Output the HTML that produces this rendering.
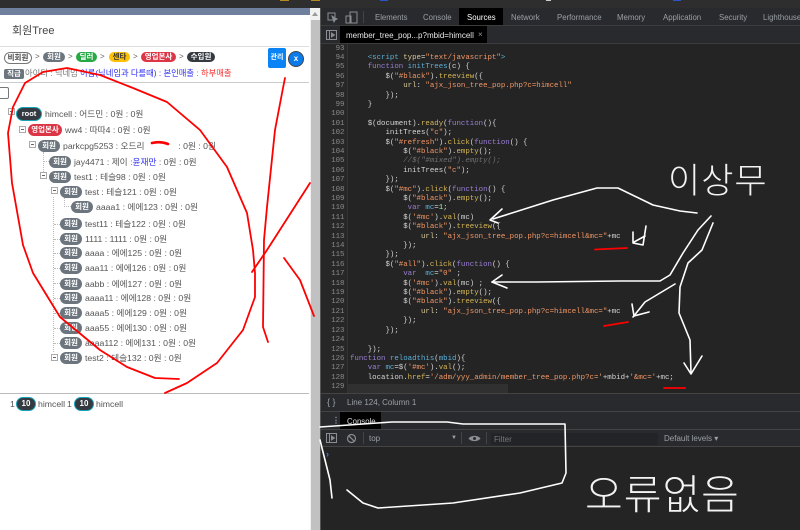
<!DOCTYPE html>
<html lang="ko">
<head>
<meta charset="utf-8">
<style>
html,body{margin:0;padding:0;width:800px;height:530px;overflow:hidden;background:#fff}
#w{position:relative;width:800px;height:530px;overflow:hidden;filter:blur(.25px);font-family:"Liberation Sans","Noto Sans CJK KR",sans-serif}
.a{position:absolute}
.t{position:absolute;white-space:nowrap;font-size:8.7px;line-height:12px;color:#555}
.b{display:inline-block;font-weight:700;color:#fff;background:#6c757d;border-radius:6px;font-size:7.5px;line-height:12px;height:12px;width:22px;text-align:center;margin-right:3px;vertical-align:middle;position:relative;top:-1px}
.r{background:#dc3545}
.lg{position:absolute;top:52px;height:10px;line-height:10px;font-size:7.5px;font-weight:700;color:#fff;text-align:center;border-radius:6px}
.ar{position:absolute;top:52px;font-size:8px;line-height:10px;color:#666}
.bx{position:absolute;width:5px;height:5px;border:1px solid #aaa;background:#fff}
.bx:after{content:"";position:absolute;left:1px;right:1px;top:2px;height:1px;background:#666}
.v{position:absolute;border-left:1px dotted #bbb;width:0}
.h{position:absolute;border-top:1px dotted #bbb;height:0}
.tab{position:absolute;top:12px;font-size:7.8px;line-height:11px;color:#9aa0a6;white-space:nowrap}
pre{margin:0;font-family:"Liberation Mono",monospace;font-size:7.4px;line-height:9.4px}
#code{position:absolute;left:350px;top:44.5px;color:#d5d5d5}
#nums{position:absolute;left:320px;top:44.5px;width:24.5px;text-align:right;color:#8a8a8a}
.k{color:#9a7fd5}.s{color:#f29766}.d{color:#5db0d7}.y{color:#d6b656}.c{color:#707070;font-style:italic}.g{color:#a1f7b5}.u{color:#d8c89a}
</style>
</head>
<body>
<div id="w">
<!-- top strip -->
<div class="a" style="left:0;top:0;width:800px;height:8px;background:#2e2e2e"></div>
<div class="a" style="left:280px;top:0;width:9px;height:1px;background:#b58a1e"></div>
<div class="a" style="left:311px;top:0;width:9px;height:1px;background:#b58a1e"></div>
<div class="a" style="left:380px;top:0;width:8px;height:1px;background:#2a55c8"></div>
<div class="a" style="left:546px;top:0;width:5px;height:1px;background:#ccc"></div>
<div class="a" style="left:673px;top:0;width:8px;height:1px;background:#2a55c8"></div>

<!-- left page -->
<div class="a" style="left:0;top:8px;width:310px;height:7px;background:#6f7f9e"></div>
<div class="a" style="left:310px;top:8px;width:10px;height:522px;background:#f1f1f1"></div>
<div class="a" style="left:311px;top:20px;width:9px;height:510px;background:#c1c1c1"></div>
<div class="a" style="left:312px;top:12px;width:0;height:0;border:3px solid transparent;border-bottom:4px solid #999;border-top:0"></div>
<div class="t" style="left:12px;top:24px;font-size:11px;line-height:14px;color:#444">회원Tree</div>
<div class="a" style="left:0;top:46px;width:309px;height:1px;background:#ddd"></div>
<div class="a" style="left:0;top:82px;width:309px;height:1px;background:#ccc"></div>

<div class="lg" style="left:4px;width:26px;background:#fff;color:#444;border:1px solid #777;top:52px">비회원</div>
<div class="ar" style="left:35px">&gt;</div>
<div class="lg" style="left:43px;width:22px;background:#6c757d">회원</div>
<div class="ar" style="left:68px">&gt;</div>
<div class="lg" style="left:76px;width:21px;background:#28a745">딜러</div>
<div class="ar" style="left:100px">&gt;</div>
<div class="lg" style="left:109px;width:21px;background:#ffc107;color:#333">센타</div>
<div class="ar" style="left:133px">&gt;</div>
<div class="lg" style="left:141px;width:35px;background:#dc3545">영업본사</div>
<div class="ar" style="left:179px">&gt;</div>
<div class="lg" style="left:187px;width:28px;background:#343a40">수입원</div>

<div class="lg" style="left:4px;top:69px;width:20px;background:#6c757d;border-radius:2px">직급</div>
<div class="t" style="left:25px;top:67px;font-size:8.3px;color:#777">아이디 : 닉네임 <span style="color:#3030f0">이름(닉네임과 다를때) : 본인매출</span> : <span style="color:#f03030">하부매출</span></div>

<div class="a" style="left:268px;top:48px;width:18px;height:20px;background:#0a84f5;border-radius:2px;color:#fff;font-size:7px;line-height:20px;text-align:center;font-weight:700">관리</div>
<div class="a" style="left:289px;top:52px;width:14px;height:14px;background:#0a7bea;border-radius:50%;box-shadow:0 0 0 1px #444;color:#fff;font-size:8px;line-height:13px;text-align:center;font-weight:700">x</div>
<div class="a" style="left:-3px;top:87px;width:10px;height:10px;border:1px solid #777;border-radius:2px"></div>

<!-- tree guides -->
<div class="v" style="left:53px;top:197px;height:155px"></div>
<div class="v" style="left:43px;top:152px;height:24px"></div>
<div class="v" style="left:64px;top:197px;height:10px"></div>
<div class="h" style="left:43px;top:161px;width:6px"></div>
<div class="h" style="left:64px;top:206px;width:7px"></div>
<div class="h" style="left:54px;top:224px;width:6px"></div>
<div class="h" style="left:54px;top:239px;width:6px"></div>
<div class="h" style="left:54px;top:253px;width:6px"></div>
<div class="h" style="left:54px;top:268px;width:6px"></div>
<div class="h" style="left:54px;top:283px;width:6px"></div>
<div class="h" style="left:54px;top:298px;width:6px"></div>
<div class="h" style="left:54px;top:313px;width:6px"></div>
<div class="h" style="left:54px;top:328px;width:6px"></div>
<div class="h" style="left:54px;top:343px;width:6px"></div>
<div class="bx" style="left:8px;top:108px"></div>
<div class="bx" style="left:19px;top:126px"></div>
<div class="bx" style="left:29px;top:141px"></div>
<div class="bx" style="left:40px;top:172px"></div>
<div class="bx" style="left:51px;top:187px"></div>
<div class="bx" style="left:51px;top:354px"></div>

<!-- tree rows -->
<div class="t" style="left:17px;top:108px"><span class="b" style="width:24px;margin-right:4px;background:#343a40;box-shadow:0 0 0 1px #17a2b8">root</span>himcell : 어드민 : 0원 : 0원</div>
<div class="t" style="left:28px;top:124px"><span class="b r" style="width:34px">영업본사</span>ww4 : 따따4 : 0원 : 0원</div>
<div class="t" style="left:38px;top:140px"><span class="b">회원</span>parkcpg5253 : 오드리 &nbsp; &nbsp; &nbsp; &nbsp; &nbsp; &nbsp; &nbsp;: 0원 : 0원</div>
<div class="t" style="left:49px;top:156px"><span class="b">회원</span>jay4471 : 제이 :<span style="color:#3030f0">윤재만</span> : 0원 : 0원</div>
<div class="t" style="left:49px;top:171px"><span class="b">회원</span>test1 : 테슬98 : 0원 : 0원</div>
<div class="t" style="left:60px;top:186px"><span class="b">회원</span>test : 테슬121 : 0원 : 0원</div>
<div class="t" style="left:71px;top:201px"><span class="b">회원</span>aaaa1 : 에에123 : 0원 : 0원</div>
<div class="t" style="left:60px;top:218px"><span class="b">회원</span>test11 : 테슬122 : 0원 : 0원</div>
<div class="t" style="left:60px;top:233px"><span class="b">회원</span>1111 : 1111 : 0원 : 0원</div>
<div class="t" style="left:60px;top:247px"><span class="b">회원</span>aaaa : 에에125 : 0원 : 0원</div>
<div class="t" style="left:60px;top:262px"><span class="b">회원</span>aaa11 : 에에126 : 0원 : 0원</div>
<div class="t" style="left:60px;top:278px"><span class="b">회원</span>aabb : 에에127 : 0원 : 0원</div>
<div class="t" style="left:60px;top:292px"><span class="b">회원</span>aaaa11 : 에에128 : 0원 : 0원</div>
<div class="t" style="left:60px;top:307px"><span class="b">회원</span>aaaa5 : 에에129 : 0원 : 0원</div>
<div class="t" style="left:60px;top:322px"><span class="b">회원</span>aaa55 : 에에130 : 0원 : 0원</div>
<div class="t" style="left:60px;top:337px"><span class="b">회원</span>aaaa112 : 에에131 : 0원 : 0원</div>
<div class="t" style="left:60px;top:352px"><span class="b">회원</span>test2 : 테슬132 : 0원 : 0원</div>

<div class="a" style="left:0;top:393px;width:309px;height:1px;background:#bbb"></div>
<div class="t" style="left:10px;top:398px">1</div>
<div class="t" style="left:17px;top:398px"><span class="b" style="width:18px;background:#343a40;box-shadow:0 0 0 1px #17a2b8;font-size:8px">10</span>himcell</div>
<div class="t" style="left:67px;top:398px">1</div>
<div class="t" style="left:75px;top:398px"><span class="b" style="width:18px;background:#343a40;box-shadow:0 0 0 1px #17a2b8;font-size:8px">10</span>himcell</div>

<!-- devtools -->
<div class="a" style="left:320px;top:8px;width:480px;height:522px;background:#242424"></div>
<div class="a" style="left:320px;top:8px;width:1px;height:522px;background:#555"></div>
<div class="a" style="left:321px;top:8px;width:479px;height:17px;background:#292a2d"></div>
<div class="a" style="left:321px;top:25px;width:479px;height:1px;background:#3c3c3c"></div>
<div class="a" style="left:459px;top:8px;width:44px;height:17px;background:#000"></div>
<svg class="a" style="left:326px;top:11px" width="36" height="13" viewBox="0 0 36 13" fill="none" stroke="#8a8d91" stroke-width="1"><path d="M8 9H2V2H9V6"/><path d="M6 5l5 3-2 1-1 2z" fill="#8a8d91"/><rect x="24" y="1" width="7" height="11"/><rect x="20" y="5" width="5" height="7"/></svg>
<div class="a" style="left:363px;top:11px;width:1px;height:12px;background:#444"></div>
<div class="tab" style="left:375px">Elements</div>
<div class="tab" style="left:423px">Console</div>
<div class="tab" style="left:467px;color:#fff">Sources</div>
<div class="tab" style="left:511px">Network</div>
<div class="tab" style="left:557px">Performance</div>
<div class="tab" style="left:617px">Memory</div>
<div class="tab" style="left:663px">Application</div>
<div class="tab" style="left:719px">Security</div>
<div class="tab" style="left:763px">Lighthouse</div>

<div class="a" style="left:321px;top:26px;width:479px;height:17px;background:#292a2d"></div>
<div class="a" style="left:321px;top:43px;width:479px;height:1px;background:#3c3c3c"></div>
<div class="a" style="left:340px;top:26px;width:147px;height:17px;background:#000"></div>
<svg class="a" style="left:326px;top:29px" width="12" height="12" viewBox="0 0 12 12" fill="none" stroke="#8a8d91"><rect x=".5" y="1.5" width="10" height="9"/><path d="M3.5 2v8"/><path d="M5.5 4l3 2-3 2z" fill="#8a8d91"/></svg>
<div class="tab" style="left:346px;top:30px;color:#e8e8e8;font-size:8px">member_tree_pop...p?mbid=himcell</div>
<div class="tab" style="left:478px;top:29px;color:#999;font-size:8px">×</div>

<!-- gutter -->
<div class="a" style="left:321px;top:44px;width:26px;height:349px;background:#272727"></div>
<div class="a" style="left:347px;top:44px;width:1px;height:349px;background:#333"></div>
<div class="a" style="left:348px;top:384px;width:160px;height:9px;background:#303030"></div>

<pre id="nums">93
94
95
96
97
98
99
100
101
102
103
104
105
106
107
108
109
110
111
112
113
114
115
116
117
118
119
120
121
122
123
124
125
126
127
128
129</pre>
<pre id="code">

    <span class="d">&lt;script</span> <span class="u">type</span>=<span class="s">"text/javascript"</span><span class="d">&gt;</span>
    <span class="k">function</span> <span class="d">initTrees</span>(c) {
        $(<span class="s">"#black"</span>).<span class="y">treeview</span>({
            <span class="u">url</span>: <span class="s">"ajx_json_tree_pop.php?c=himcell"</span>
        });
    }

    $(document).<span class="y">ready</span>(<span class="k">function</span>(){
        initTrees(<span class="s">"c"</span>);
        $(<span class="s">"#refresh"</span>).<span class="y">click</span>(<span class="k">function</span>() {
            $(<span class="s">"#black"</span>).<span class="y">empty</span>();
            <span class="c">//$("#mixed").empty();</span>
            initTrees(<span class="s">"c"</span>);
        });
        $(<span class="s">"#mc"</span>).<span class="y">click</span>(<span class="k">function</span>() {
            $(<span class="s">"#black"</span>).<span class="y">empty</span>();
             <span class="k">var</span> <span class="d">mc</span>=<span class="g">1</span>;
            $(<span class="s">'#mc'</span>).<span class="y">val</span>(mc)
            $(<span class="s">"#black"</span>).<span class="y">treeview</span>({
                <span class="u">url</span>: <span class="s">"ajx_json_tree_pop.php?c=himcell&amp;mc="</span>+mc
            });
        });
        $(<span class="s">"#all"</span>).<span class="y">click</span>(<span class="k">function</span>() {
            <span class="k">var</span>  <span class="d">mc</span>=<span class="s">"0"</span> ;
            $(<span class="s">'#mc'</span>).<span class="y">val</span>(mc) ;
            $(<span class="s">"#black"</span>).<span class="y">empty</span>();
            $(<span class="s">"#black"</span>).<span class="y">treeview</span>({
                <span class="u">url</span>: <span class="s">"ajx_json_tree_pop.php?c=himcell&amp;mc="</span>+mc
            });
        });

    });
<span class="k">function</span> <span class="d">reloadthis</span>(<span class="d">mbid</span>){
    <span class="k">var</span> <span class="d">mc</span>=$(<span class="s">'#mc'</span>).<span class="y">val</span>();
    location.<span class="y">href</span>=<span class="s">'/adm/yyy_admin/member_tree_pop.php?c='</span>+mbid+<span class="s">'&amp;mc='</span>+mc;
</pre>

<!-- status -->
<div class="a" style="left:321px;top:393px;width:479px;height:18px;background:#292a2d;border-top:1px solid #444;box-sizing:border-box"></div>
<div class="tab" style="left:327px;top:397px;font-size:9px">{ }</div>
<div class="tab" style="left:347px;top:397px;font-size:8px">Line 124, Column 1</div>
<div class="a" style="left:321px;top:411px;width:479px;height:18px;background:#292a2d;border-top:1px solid #444;box-sizing:border-box"></div>
<div class="a" style="left:340px;top:412px;width:41px;height:17px;background:#000"></div>
<div class="tab" style="left:332px;top:415px;font-weight:700">⋮</div>
<div class="tab" style="left:347px;top:416px;color:#ddd">Console</div>
<div class="a" style="left:321px;top:429px;width:479px;height:18px;background:#292a2d;border-top:1px solid #444;border-bottom:1px solid #444;box-sizing:border-box"></div>
<svg class="a" style="left:326px;top:432px" width="12" height="12" viewBox="0 0 12 12" fill="none" stroke="#8a8d91"><rect x=".5" y="1.5" width="10" height="9"/><path d="M3.5 2v8"/><path d="M5.5 4l3 2-3 2z" fill="#8a8d91"/></svg>
<svg class="a" style="left:346px;top:433px" width="11" height="11" viewBox="0 0 11 11" fill="none" stroke="#8a8d91" stroke-width="1.2"><circle cx="5.5" cy="5.5" r="4"/><path d="M2.7 2.7l5.6 5.6"/></svg>
<div class="a" style="left:363px;top:432px;width:1px;height:12px;background:#444"></div>
<div class="tab" style="left:369px;top:433px;font-size:8px">top</div>
<div class="tab" style="left:451px;top:433px;font-size:6px">▼</div>
<div class="a" style="left:461px;top:432px;width:1px;height:12px;background:#444"></div>
<svg class="a" style="left:468px;top:434px" width="13" height="9" viewBox="0 0 13 9"><path d="M.5 4.5C3 1 10 1 12.5 4.5 10 8 3 8 .5 4.5z" fill="#8a8d91"/><circle cx="6.5" cy="4.5" r="1.5" fill="#292a2d"/></svg>
<div class="a" style="left:486px;top:432px;width:1px;height:12px;background:#444"></div>
<div class="a" style="left:491px;top:433px;width:167px;height:12px;background:#232427"></div>
<div class="tab" style="left:494px;top:434px;font-size:8px;color:#777">Filter</div>
<div class="tab" style="left:664px;top:433px;font-size:8px">Default levels ▾</div>
<div class="tab" style="left:326px;top:449px;color:#3b78e7;font-size:9px;font-weight:700">›</div>

<!-- handwriting as real text -->
<div class="a" style="left:668px;top:152px;font-family:'Noto Sans CJK KR',sans-serif;font-weight:300;font-size:35px;line-height:54px;letter-spacing:1px;color:#fff;white-space:nowrap;opacity:.95">이상무</div>
<div class="a" style="left:585px;top:461px;font-family:'Noto Sans CJK KR',sans-serif;font-weight:300;font-size:41px;line-height:60px;letter-spacing:1px;color:#fff;white-space:nowrap;opacity:.95">오류없음</div>

<svg class="a" style="left:0;top:0" width="800" height="530" viewBox="0 0 800 530" fill="none" stroke-linecap="round" stroke-linejoin="round">
<g stroke="#f00" stroke-width="1.8">
<path d="M179 379L155 378 127 367 100 350 60 317 33 273 23 245 12 183 8 133 13 107 25 83 43 72 67 68 100 75 133 88 167 102 200 130 227 167 247 213 253 250 255 273 255 297 243 330 217 363 187 383 165 393"/>
<path d="M285 78L283 88 275 130 267 207 264 240 263 327 268 342"/>
<path d="M310 183L267 250 252 272"/>
<path d="M284 258L300 280 314 316"/>
<path d="M152 143Q160 141 168 144" stroke-width="2.6"/>
<path d="M595 249.5L627 248"/>
<path d="M604 326L628 322"/>
<path d="M664 388H685"/>
</g>
<g stroke="#fff" stroke-width="1.6">
<path d="M493 219L553 200 597 188 618 188 653 205 680 211 697 213"/>
<path d="M502 209L490 220 498 223"/>
<path d="M633 232V243L643 245 646 226M634 242L645 236"/>
<path d="M711 216L698 230 683 253 670 275 660 281H620L537 282H492"/>
<path d="M502 275L492 282 507 288"/>
<path d="M675 284L645 302 633 317"/>
<path d="M632 304L634 316 649 312"/>
<path d="M713 223L702 250 688 263 680 287 679 313 690 340 691 373"/>
<path d="M684 363L691 374 702 356"/>
<path d="M320 427L392 422H447L463 424H565L566 473 562 483 520 493 453 503 378 508 363 503 347 490"/>
<path d="M320 440L330 480 332 498"/>
</g>
</svg>
</div>
</body>
</html>
